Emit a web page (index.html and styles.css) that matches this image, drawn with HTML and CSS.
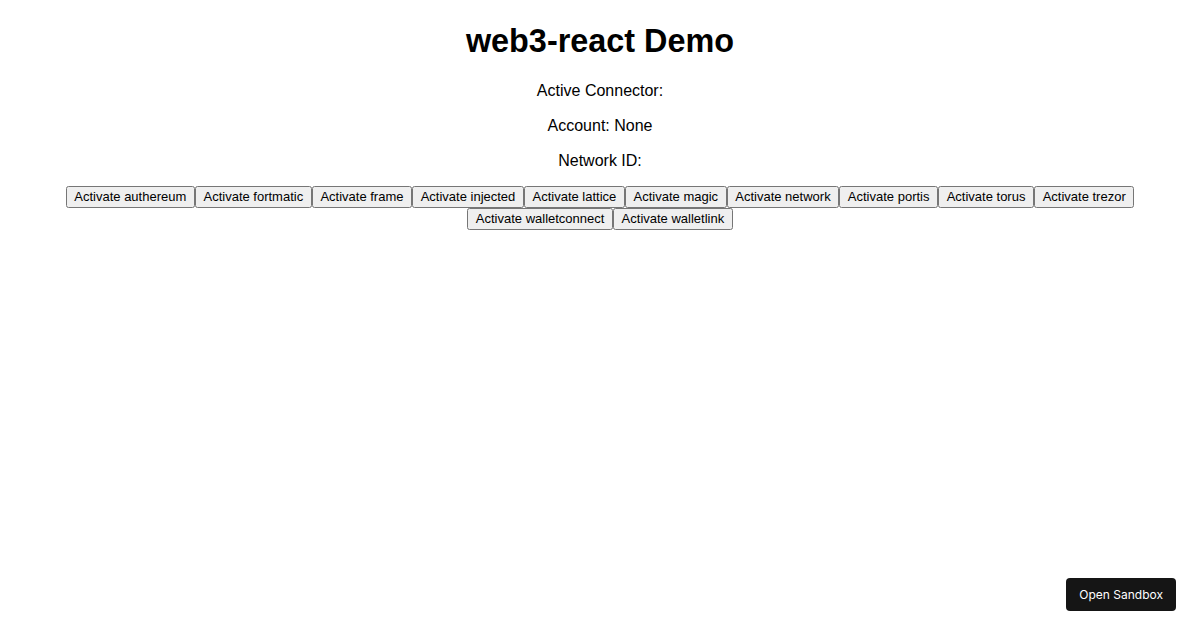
FILE: index.html
```html
<!DOCTYPE html>
<html lang="en">
<head>
    <meta charset="UTF-8">
    <meta name="viewport" content="width=device-width, initial-scale=1.0">
    <title>web3-react Demo</title>
    <link rel="stylesheet" href="styles.css">
</head>
<body>
    <div class="app">
        <h1>web3-react Demo</h1>
        <p>Active Connector: </p>
        <p>Account: None</p>
        <p>Network ID: </p>
        <div class="connectors"><button>Activate authereum</button><button>Activate fortmatic</button><button>Activate frame</button><button>Activate injected</button><button>Activate lattice</button><button>Activate magic</button><button>Activate network</button><button>Activate portis</button><button>Activate torus</button><button>Activate trezor</button><button>Activate walletconnect</button><button>Activate walletlink</button></div>
    </div>
    <a class="sandbox-btn" href="#">Open Sandbox</a>
</body>
</html>
```

FILE: styles.css
```css
body {
    margin: 0;
    padding-top: 1px;
    font-family: "Liberation Sans", Arial, sans-serif;
    background: #fff;
    color: #000;
}

.app {
    text-align: center;
}

.app h1 {
    font-size: 32.4px;
}

.app p {
    line-height: 19px;
}

.connectors {
    display: flex;
    flex-wrap: wrap;
    justify-content: center;
}

.connectors button {
    font-family: "Liberation Sans", Arial, sans-serif;
    font-size: 13px;
    line-height: 16px;
    padding: 1px 6.6px;
}

.sandbox-btn {
    position: fixed;
    right: 24px;
    bottom: 19px;
    background-color: #151515;
    color: #fff;
    font-family: Inter, "Liberation Sans", sans-serif;
    font-size: 12px;
    line-height: 15px;
    text-decoration: none;
    padding: 9px 13px;
    border-radius: 4px;
}
```
